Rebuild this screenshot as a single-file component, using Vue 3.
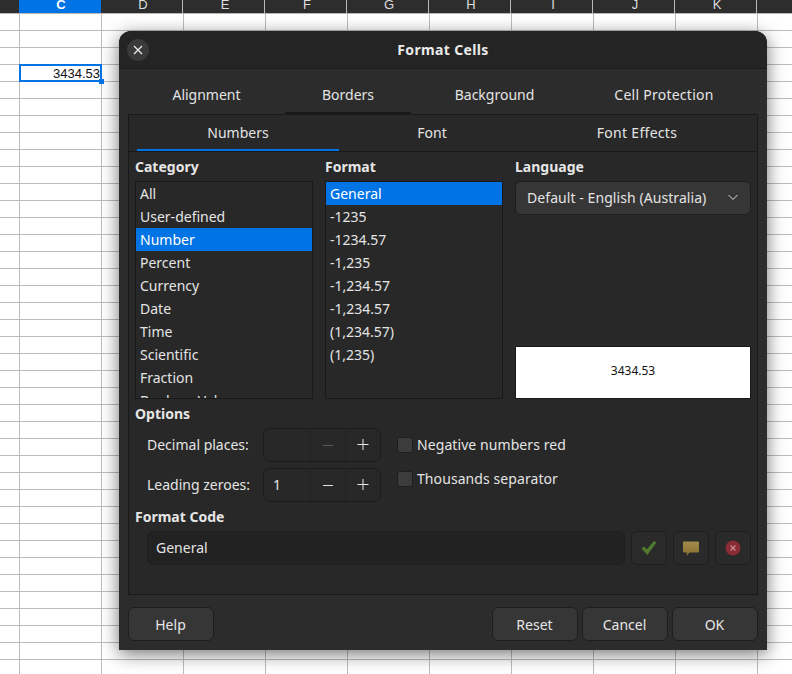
<script setup>
const columns = ['C', 'D', 'E', 'F', 'G', 'H', 'I', 'J', 'K']
const rows = Array.from({ length: 40 }, (_, i) => i)
const mainTabs = [
  { label: 'Alignment', cls: 'w1' },
  { label: 'Borders', cls: 'w2 active' },
  { label: 'Background', cls: 'w3' },
  { label: 'Cell Protection', cls: 'w4' }
]
const subTabs = [
  { label: 'Numbers', cls: 's1 active' },
  { label: 'Font', cls: 's2' },
  { label: 'Font Effects', cls: 's3' }
]
const categories = ['All', 'User-defined', 'Number', 'Percent', 'Currency', 'Date', 'Time', 'Scientific', 'Fraction', 'Boolean Value', 'Text']
const formats = ['General', '-1235', '-1234.57', '-1,235', '-1,234.57', '-1,234.57', '(1,234.57)', '(1,235)']
</script>

<template>
  <div class="page">
    <div class="sheet-head">
      <div class="corner"></div>
      <div v-for="c in columns" :key="c" class="col-head" :class="{ current: c === 'C' }">{{ c }}</div>
      <div class="head-rest"></div>
    </div>
    <div v-for="r in rows" :key="r" class="sheet-row">
      <div class="row-first"></div>
      <div v-for="c in columns" :key="c" class="cell"></div>
    </div>

    <div class="selected-cell">3434.53<span class="handle"></span></div>

    <section class="dialog">
      <header class="titlebar">
        <button class="close" aria-label="Close">
          <svg width="10" height="10" viewBox="0 0 10 10"><path d="M1 1l8 8M9 1l-8 8" stroke="#f0f0f0" stroke-width="1.2" fill="none"/></svg>
        </button>
        <h1 class="title">Format Cells</h1>
      </header>

      <div class="body">
        <nav class="main-tabs">
          <div v-for="t in mainTabs" :key="t.label" class="main-tab" :class="t.cls">{{ t.label }}</div>
        </nav>

        <div class="notebook">
          <nav class="sub-tabs">
            <div v-for="t in subTabs" :key="t.label" class="sub-tab" :class="t.cls">{{ t.label }}</div>
          </nav>

          <div class="content">
            <div class="top-grid">
              <div class="column">
                <h2 class="heading">Category</h2>
                <ul class="list">
                  <li v-for="c in categories" :key="c" class="item" :class="{ selected: c === 'Number' }">{{ c }}</li>
                </ul>
              </div>
              <div class="column">
                <h2 class="heading">Format</h2>
                <ul class="list">
                  <li v-for="(f, i) in formats" :key="i" class="item" :class="{ selected: i === 0 }">{{ f }}</li>
                </ul>
              </div>
              <div class="column">
                <h2 class="heading">Language</h2>
                <div class="lang-col">
                  <div class="combo">
                    <span>Default - English (Australia)</span>
                    <svg width="12" height="12" viewBox="0 0 12 12"><path d="M1.5 4l4.5 4.5L10.500 4" stroke="#dcdcdc" stroke-width="1" fill="none"/></svg>
                  </div>
                  <div class="preview">3434.53</div>
                </div>
              </div>
            </div>

            <h2 class="heading">Options</h2>
            <div class="options">
              <div class="spin-rows">
                <div class="spin-row">
                  <label class="spin-label">Decimal places:</label>
                  <div class="spin">
                    <div class="spin-entry"></div>
                    <div class="spin-btn minus">
                      <svg width="12" height="12" viewBox="0 0 12 12"><path d="M1 6.500h10" stroke="#5a5a5a" stroke-width="1"/></svg>
                    </div>
                    <div class="spin-btn plus">
                      <svg width="12" height="12" viewBox="0 0 12 12"><path d="M0.500 5.500h11M6 0v11" stroke="#e6e6e6" stroke-width="1"/></svg>
                    </div>
                  </div>
                </div>
                <div class="spin-row">
                  <label class="spin-label">Leading zeroes:</label>
                  <div class="spin">
                    <div class="spin-entry">1</div>
                    <div class="spin-btn minus">
                      <svg width="12" height="12" viewBox="0 0 12 12"><path d="M1 6.500h10" stroke="#e6e6e6" stroke-width="1"/></svg>
                    </div>
                    <div class="spin-btn plus">
                      <svg width="12" height="12" viewBox="0 0 12 12"><path d="M0.500 5.500h11M6 0v11" stroke="#e6e6e6" stroke-width="1"/></svg>
                    </div>
                  </div>
                </div>
              </div>
              <div class="checks">
                <div class="check-row"><span class="checkbox"></span><span class="check-text">Negative numbers red</span></div>
                <div class="check-row"><span class="checkbox"></span><span class="check-text">Thousands separator</span></div>
              </div>
            </div>

            <h2 class="heading">Format Code</h2>
            <div class="code-row">
              <div class="code-input">General</div>
              <button class="icon-btn" aria-label="Add">
                <svg width="18" height="16" viewBox="0 0 18 16"><path d="M1.500 8.500l2.500-2 2.800 2.800L14 1l2.500 1.500L7.300 15z" fill="#4f7a2e"/></svg>
              </button>
              <button class="icon-btn" aria-label="Comment">
                <svg width="18" height="17" viewBox="0 0 18 17">
                  <defs>
                    <linearGradient id="commentFill" x1="0" y1="0" x2="0" y2="1">
                      <stop offset="0" stop-color="#a08a4a"/>
                      <stop offset="1" stop-color="#8a6f30"/>
                    </linearGradient>
                  </defs>
                  <path d="M2 1.500h14a1 1 0 0 1 1 1v9a1 1 0 0 1-1 1H7.500l-3 3.500 0.500-3.500H2a1 1 0 0 1-1-1v-9a1 1 0 0 1 1-1z" fill="url(#commentFill)"/>
                </svg>
              </button>
              <button class="icon-btn" aria-label="Remove">
                <svg width="16" height="16" viewBox="0 0 16 16"><circle cx="8" cy="8" r="7.500" fill="#8a2c34"/><path d="M5.500 5.500l5 5M10.500 5.500l-5 5" stroke="#c98f92" stroke-width="1.100"/></svg>
              </button>
            </div>
          </div>
        </div>
      </div>

      <footer class="footer">
        <button class="btn">Help</button>
        <div class="footer-right">
          <button class="btn">Reset</button>
          <button class="btn">Cancel</button>
          <button class="btn">OK</button>
        </div>
      </footer>
    </section>
  </div>
</template>

<style>
html, body { margin: 0; background: #fff; overflow: hidden; }
</style>

<style scoped>
* { box-sizing: border-box; }
.page {
  position: relative;
  width: 792px;
  height: 674px;
  overflow: hidden;
  background: #fff;
  font-family: "Noto Sans", "Open Sans", sans-serif;
  font-size: 14px;
  color: #e4e4e4;
}
.sheet-head { display: flex; height: 14px; border-bottom: 1px solid #b8b8b8; background: #2d2d2d; }
.corner { width: 19px; flex: none; }
.col-head {
  width: 82px;
  flex: none;
  padding-left: 3px;
  border-right: 1px solid #b8b8b8;
  font-family: "Liberation Sans", sans-serif;
  font-size: 13px;
  line-height: 9px;
  text-align: center;
  color: #dedede;
}
.col-head:first-of-type { width: 83px; }
.col-head.current { background: #0073e5; color: #fff; font-weight: 700; border-right-color: #0073e5; }
.head-rest { flex: 1; }
.sheet-row { display: flex; height: 17px; border-bottom: 1px solid #bcbcbc; }
.row-first { width: 20px; flex: none; border-right: 1px solid #bcbcbc; }
.cell { width: 82px; flex: none; border-right: 1px solid #bcbcbc; }

.selected-cell {
  position: absolute;
  left: 19px;
  top: 64px;
  width: 83px;
  height: 18px;
  border: 2px solid #0073e5;
  background: #fff;
  color: #111;
  font-family: "Liberation Sans", sans-serif;
  font-size: 13px;
  line-height: 15px;
  text-align: right;
}
.handle {
  position: absolute;
  right: -4px;
  bottom: -4px;
  width: 5px;
  height: 5px;
  background: #0073e5;
}

.dialog {
  position: absolute;
  left: 119px;
  top: 31px;
  width: 648px;
  height: 619px;
  display: flex;
  flex-direction: column;
  background: #2c2c2c;
  border-radius: 12px 12px 0 0;
  box-shadow: 0 4px 18px rgba(0, 0, 0, 0.55);
  overflow: hidden;
}
.titlebar {
  position: relative;
  height: 38px;
  flex: none;
  display: flex;
  align-items: center;
  justify-content: center;
  background: #242424;
  border-bottom: 1px solid #191919;
}
.close {
  position: absolute;
  left: 8px;
  top: 8px;
  width: 22px;
  height: 22px;
  padding: 0;
  display: flex;
  align-items: center;
  justify-content: center;
  border: 0;
  border-radius: 50%;
  background: #3a3a3a;
}
.title { margin: 0; font-size: 14px; font-weight: 700; color: #eaeaea; line-height: 20px; letter-spacing: 0.35px; }

.body { padding: 0 9px; flex: none; }
.main-tabs { display: flex; height: 45px; }
.main-tab {
  display: flex;
  align-items: center;
  justify-content: center;
  padding-top: 7px;
  border-bottom: 2px solid transparent;
}
.main-tab.active { border-bottom-color: #191919; }
.w1 { width: 157px; }
.w2 { width: 126px; }
.w3 { width: 167px; }
.w4 { width: 172px; letter-spacing: 0.25px; }

.notebook {
  height: 481px;
  background: #282828;
  border: 1px solid #191919;
}
.sub-tabs { display: flex; height: 37px; padding: 0 8px; border-bottom: 1px solid #191919; }
.sub-tab {
  display: flex;
  align-items: center;
  justify-content: center;
  border-bottom: 2px solid transparent;
}
.sub-tab.active { border-bottom-color: #0073e5; }
.s1 { width: 202px; }
.s2 { width: 186px; }
.s3 { width: 224px; letter-spacing: 0.3px; }

.content { padding: 0 6px; }
.top-grid { display: grid; grid-template-columns: 178px 178px 236px; column-gap: 12px; }
.column { display: flex; flex-direction: column; }
.heading {
  margin: 0;
  height: 29px;
  display: flex;
  align-items: center;
  font-size: 14px;
  font-weight: 700;
  color: #e6e6e6;
}
.list {
  height: 218px;
  margin: 0;
  padding: 0;
  list-style: none;
  overflow: hidden;
  border: 1px solid #191919;
  background: #282828;
}
.item { height: 23px; line-height: 23px; padding-left: 4px; }
.item.selected { background: #0073e5; color: #fff; }
.lang-col { height: 218px; display: flex; flex-direction: column; justify-content: space-between; }
.combo {
  height: 34px;
  display: flex;
  align-items: center;
  justify-content: space-between;
  padding: 0 11px 2px;
  background: #363636;
  border: 1px solid #1e1e1e;
  border-radius: 6px;
  letter-spacing: 0.07px;
}
.preview {
  height: 53px;
  display: flex;
  align-items: center;
  justify-content: center;
  padding-bottom: 5px;
  background: #fff;
  border: 1px solid #191919;
  color: #111;
  font-size: 12px;
}

.options { display: flex; gap: 16px; padding-left: 12px; }
.spin-rows { display: flex; flex-direction: column; gap: 6px; }
.spin-row { display: flex; align-items: center; }
.spin-label { width: 116px; padding-bottom: 2px; }
.spin {
  width: 118px;
  height: 34px;
  display: flex;
  border: 1px solid #1c1c1c;
  border-radius: 7px;
  background: #282828;
}
.spin-entry { width: 46px; line-height: 32px; padding-left: 9px; }
.spin-btn {
  display: flex;
  align-items: center;
  justify-content: center;
  border-left: 1px solid #222;
}
.minus { width: 35px; }
.plus { flex: 1; }
.checks { display: flex; flex-direction: column; }
.check-row { height: 34px; display: flex; align-items: center; gap: 4px; letter-spacing: 0.08px; }
.check-text { padding-bottom: 2px; }
.checkbox {
  width: 16px;
  height: 16px;
  background: #3c3c3c;
  border: 1px solid #1e1e1e;
  border-radius: 3px;
}

.code-row { display: flex; gap: 6px; padding-left: 12px; }
.code-input {
  width: 478px;
  height: 34px;
  line-height: 32px;
  padding-left: 8px;
  background: #222;
  border: 1px solid #1e1e1e;
  border-radius: 6px;
}
.icon-btn {
  width: 36px;
  height: 34px;
  padding: 0;
  display: flex;
  align-items: center;
  justify-content: center;
  background: #2a2a2a;
  border: 1px solid #1e1e1e;
  border-radius: 6px;
}

.footer { display: flex; justify-content: space-between; padding: 12px 9px 9px; }
.footer-right { display: flex; gap: 4px; }
.btn {
  width: 86px;
  height: 34px;
  padding: 0 1px 0 0;
  background: #363636;
  border: 1px solid #1e1e1e;
  border-radius: 6px;
  color: #e6e6e6;
  font: inherit;
}
</style>
